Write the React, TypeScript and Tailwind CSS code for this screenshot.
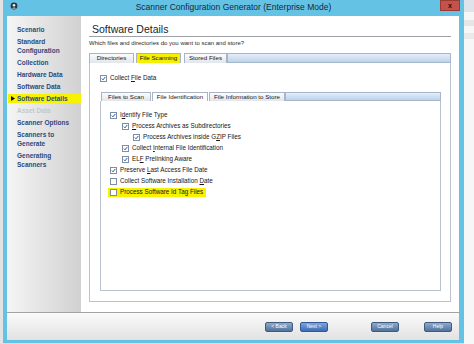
import type { ReactNode } from 'react'

interface NavItem {
  lines: string[]
  current?: boolean
  disabled?: boolean
}

interface Option {
  indent: 0 | 1 | 2
  checked: boolean
  label: ReactNode
  marked?: boolean
}

const navItems: NavItem[] = [
  { lines: ['Scenario'] },
  { lines: ['Standard', 'Configuration'] },
  { lines: ['Collection'] },
  { lines: ['Hardware Data'] },
  { lines: ['Software Data'] },
  { lines: ['Software Details'], current: true },
  { lines: ['Asset Data'], disabled: true },
  { lines: ['Scanner Options'] },
  { lines: ['Scanners to', 'Generate'] },
  { lines: ['Generating', 'Scanners'] },
]

const options: Option[] = [
  { indent: 0, checked: true, label: <>I<u>d</u>entify File Type</> },
  { indent: 1, checked: true, label: <><u>P</u>rocess Archives as Subdirectories</> },
  { indent: 2, checked: true, label: <>Process Archives inside G<u>Z</u>IP Files</> },
  { indent: 1, checked: true, label: <>Collect <u>I</u>nternal File Identification</> },
  { indent: 1, checked: true, label: <>EL<u>F</u> Prelinking Aware</> },
  { indent: 0, checked: true, label: <>Preserve <u>L</u>ast Access File Date</> },
  { indent: 0, checked: false, label: <>Collect Software Installation <u>D</u>ate</> },
  { indent: 0, checked: false, label: <>Process Software Id Tag Files</>, marked: true },
]

const indents = ['pl-0', 'pl-[12px]', 'pl-[23px]']

function CheckBox({ checked }: { checked: boolean }) {
  return (
    <span className="flex h-[7px] w-[7px] shrink-0 items-center justify-center border border-[#7d8ea5] bg-white">
      {checked && (
        <svg viewBox="0 0 8 8" className="h-[7px] w-[7px]">
          <path d="M1.3 4.1 L3.2 6.1 L6.9 1.5" fill="none" stroke="#1d4e8f" strokeWidth="1.5" />
        </svg>
      )}
    </span>
  )
}

function Tab({ label, width, active, marked }: { label: string; width: string; active?: boolean; marked?: boolean }) {
  return (
    <div
      className={`flex h-full ${width} shrink-0 items-center justify-center border border-b-0 border-[#a9b5c5] text-[6.2px] leading-none text-[#161616] ${
        marked
          ? 'bg-[#f4f000]'
          : active
            ? 'bg-white'
            : 'bg-linear-to-b from-[#fbfcfd] to-[#e1e6ec]'
      }`}
    >
      {label}
    </div>
  )
}

function FooterButton({ label, primary }: { label: string; primary?: boolean }) {
  return (
    <div
      className={`flex h-[10px] w-[28px] items-center justify-center rounded-[2px] border text-[5px] leading-none text-white ${
        primary
          ? 'border-[#2f5a96] bg-linear-to-b from-[#7ea4dc] to-[#3c6cb4]'
          : 'border-[#3f5b80] bg-linear-to-b from-[#8eaacb] to-[#50729c]'
      }`}
    >
      {label}
    </div>
  )
}

export default function App() {
  return (
    <div className="flex h-[344px] w-[474px] overflow-hidden bg-[#dcdcdc] font-['Liberation_Sans',Arial,sans-serif] text-[#161616]">
      {/* desktop strip on the left */}
      <div className="w-[3px] shrink-0 bg-[#e2e2e2]" />

      {/* window */}
      <div className="flex h-[343px] w-[461px] shrink-0 flex-col bg-[#64c3e4]">
        {/* title bar */}
        <div className="grid h-[16px] shrink-0 grid-cols-[1fr_auto_1fr]">
          <div className="flex items-start pl-[7px] pt-[2px]">
            <svg viewBox="0 0 8 8" className="h-[8px] w-[8px]">
              <circle cx="4" cy="4" r="3.4" fill="#2c3440" />
              <circle cx="4" cy="3.2" r="1.3" fill="#e8eef4" />
              <path d="M1.8 6.6 Q4 4.4 6.2 6.6" fill="#e8eef4" />
            </svg>
          </div>
          <div className="pt-[2px] text-[8.5px] leading-[10px] text-[#16283c]">
            Scanner Configuration Generator (Enterprise Mode)
          </div>
          <div className="flex justify-end pr-[4px]">
            <div className="flex h-[11px] w-[20px] items-center justify-center border border-[#9a3a34] bg-[#c4514a] text-[7px] font-bold leading-none text-[#2a0e0c]">
              x
            </div>
          </div>
        </div>

        {/* window body */}
        <div className="flex flex-1 flex-col pb-[3px] pl-[4px] pr-[5px]">
          <div className="flex flex-1 flex-col bg-white">
            <div className="flex h-[296px]">
              {/* wizard steps */}
              <div className="flex w-[74px] shrink-0 flex-col gap-[3px] bg-linear-to-r from-[#f5f5f5] to-[#d1d1d1] pt-[9px]">
                {navItems.map((item) =>
                  item.current ? (
                    <div key={item.lines[0]} className="ml-[1px] flex items-center bg-[#f7f200] pl-[3px]">
                      <svg viewBox="0 0 4 5" className="h-[5px] w-[4px]">
                        <path d="M0 0 L4 2.5 L0 5 Z" fill="#111" />
                      </svg>
                      <span className="ml-[2px] text-[6.5px] font-bold leading-[9px] text-[#2b4a7e]">{item.lines[0]}</span>
                    </div>
                  ) : (
                    <div
                      key={item.lines[0]}
                      className={`pl-[10px] text-[6.5px] font-bold leading-[9px] ${
                        item.disabled ? 'text-[#c4c8cc]' : 'text-[#2b4a7e]'
                      }`}
                    >
                      {item.lines.map((line) => (
                        <div key={line}>{line}</div>
                      ))}
                    </div>
                  )
                )}
              </div>

              {/* page */}
              <div className="flex flex-1 flex-col px-[8px] pb-[10px] pt-[7px]">
                <div className="h-[14px] border-b border-[#9ea2a8] pl-[3px] text-[10.5px] leading-[13px] text-[#202428]">
                  Software Details
                </div>
                <div className="mt-[2px] text-[6px] leading-[8px] text-[#2a2a2a]">
                  Which files and directories do you want to scan and store?
                </div>

                {/* outer tabs */}
                <div className="mt-[6px] flex flex-1 flex-col">
                  <div className="flex h-[10px] shrink-0 items-end">
                    <Tab label="Directories" width="w-[45px]" />
                    <div className="w-[2px]" />
                    <Tab label="File Scanning" width="w-[45px]" marked />
                    <div className="w-[3px]" />
                    <Tab label="Stored Files" width="w-[43px]" />
                    <div className="h-full flex-1 border border-[#a7b7cb] bg-linear-to-b from-[#e4eef9] to-[#bcd2eb]" />
                  </div>
                  <div className="flex flex-1 flex-col border-x border-b border-[#b9c2ce] pb-[10px] pl-[10px] pr-[9px]">
                    <div className="mt-[10px] flex h-[10px] items-center gap-[3px] text-[6.3px] leading-none">
                      <CheckBox checked />
                      <span>
                        Collect <u>F</u>ile Data
                      </span>
                    </div>

                    {/* inner tabs */}
                    <div className="mt-[9px] flex flex-1 flex-col">
                      <div className="flex h-[9px] shrink-0 items-end">
                        <div className="w-[1px]" />
                        <Tab label="Files to Scan" width="w-[50px]" />
                        <div className="w-[1px]" />
                        <Tab label="File Identification" width="w-[56px]" active />
                        <div className="w-[1px]" />
                        <Tab label="File Information to Store" width="w-[76px]" />
                        <div className="h-full flex-1 border border-[#a7b7cb] bg-linear-to-b from-[#e4eef9] to-[#bcd2eb]" />
                      </div>
                      <div className="flex flex-1 flex-col border-x border-b border-[#b9c2ce] pl-[9px] pt-[9px]">
                        {options.map((opt, i) => (
                          <div key={i} className={`flex h-[11px] items-center ${indents[opt.indent]}`}>
                            <div
                              className={`flex items-center gap-[3px] text-[6.3px] leading-none ${
                                opt.marked ? '-ml-[2px] h-[9px] bg-[#f7f200] pl-[2px] pr-[3px]' : ''
                              }`}
                            >
                              <CheckBox checked={opt.checked} />
                              <span>{opt.label}</span>
                            </div>
                          </div>
                        ))}
                      </div>
                    </div>
                  </div>
                </div>
              </div>
            </div>

            {/* footer */}
            <div className="flex flex-1 items-center justify-end border-t border-[#a3a3a3] bg-linear-to-b from-[#fafafa] to-[#e2e2e2] pr-[7px]">
              <FooterButton label="< Back" />
              <div className="w-[7px]" />
              <FooterButton label="Next >" primary />
              <div className="w-[43px]" />
              <FooterButton label="Cancel" />
              <div className="w-[25px]" />
              <FooterButton label="Help" />
            </div>
          </div>
        </div>
      </div>

      {/* desktop strip on the right */}
      <div className="flex flex-1 flex-col bg-[#f7f7f7]">
        <div className="h-[12px] bg-[#dfe4ea]" />
        <div className="mt-[8px] h-[6px] bg-[#e6e6e6]" />
        <div className="mt-[7px] h-[6px] bg-[#e9e9e9]" />
      </div>
    </div>
  )
}
